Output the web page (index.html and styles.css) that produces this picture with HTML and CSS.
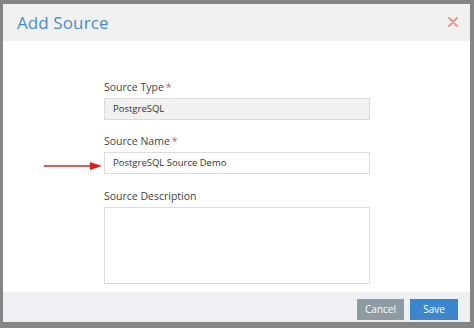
FILE: index.html
```html
<!DOCTYPE html>
<html>
<head>
<meta charset="utf-8">
<link rel="stylesheet" href="styles.css">
</head>
<body>
<div class="modal">
  <div class="header">
    <h1 class="title">Add Source</h1>
    <svg class="close" width="10" height="10" viewBox="0 0 10 10">
      <path d="M1 1 L9 9 M9 1 L1 9" stroke="#e29a8f" stroke-width="2" stroke-linecap="round"/>
    </svg>
  </div>
  <div class="content">
    <div class="field field-1">
      <div class="label">Source Type<span class="req">*</span></div>
      <div class="input readonly">PostgreSQL</div>
    </div>
    <div class="field field-2">
      <div class="label">Source Name<span class="req">*</span></div>
      <div class="input">PostgreSQL Source Demo</div>
      <svg class="arrow" width="60" height="10" viewBox="0 0 60 10">
        <line x1="0" y1="5" x2="48" y2="5" stroke="#e0201c" stroke-width="1.6"/>
        <polygon points="46,1 58,5 46,9" fill="#e0201c"/>
      </svg>
    </div>
    <div class="field">
      <div class="label">Source Description</div>
      <div class="textarea"></div>
    </div>
  </div>
  <div class="footer">
    <button class="btn cancel">Cancel</button>
    <button class="btn save">Save</button>
  </div>
</div>
</body>
</html>
```
FILE: styles.css
```css
html, body {
  margin: 0;
  padding: 0;
}
body {
  background: #858585;
  width: 474px;
  height: 328px;
  padding: 4px 4px 6px 3px;
  box-sizing: border-box;
  font-family: "Open Sans", "Liberation Sans", sans-serif;
}
.modal {
  background: #fff;
  height: 318px;
  display: flex;
  flex-direction: column;
}
.header {
  height: 37px;
  background: #f1f1f1;
  display: flex;
  align-items: center;
  justify-content: space-between;
  padding: 0 12px 0 14px;
}
.title {
  margin: 0;
  font-weight: 400;
  font-size: 17px;
  color: #4a8cc8;
  letter-spacing: 0.1px;
}
.close {
  display: block;
  margin-top: -1px;
}
.content {
  flex: 1;
  padding: 39px 0 0 101px;
  position: relative;
}
.field {
  width: 266px;
  position: relative;
}
.field-1 { margin-bottom: 14px; }
.field-2 { margin-bottom: 15px; }
.label {
  font-size: 10.5px;
  line-height: 14px;
  color: #444;
  margin-bottom: 4px;
}
.req {
  color: #d9534f;
  margin-left: 2px;
}
.input {
  height: 22px;
  box-sizing: border-box;
  border: 1px solid #dcdcdc;
  font-size: 9.5px;
  line-height: 20px;
  padding-left: 8px;
  color: #333;
  background: #fff;
}
.readonly {
  background: #f1f1f1;
}
.textarea {
  height: 77px;
  box-sizing: border-box;
  border: 1px solid #dcdcdc;
}
.arrow {
  position: absolute;
  left: -60px;
  top: 27px;
}
.footer {
  height: 30px;
  background: #eef0f4;
  display: flex;
  justify-content: flex-end;
  align-items: center;
  gap: 6px;
  padding-right: 12px;
}
.btn {
  border: none;
  height: 21px;
  color: #fff;
  font-family: "Open Sans", "Liberation Sans", sans-serif;
  font-size: 10px;
  padding: 0;
  margin-top: 4px;
}
.cancel {
  width: 47px;
  background: #8e9ba5;
}
.save {
  width: 48px;
  background: #3b86cf;
}
```
